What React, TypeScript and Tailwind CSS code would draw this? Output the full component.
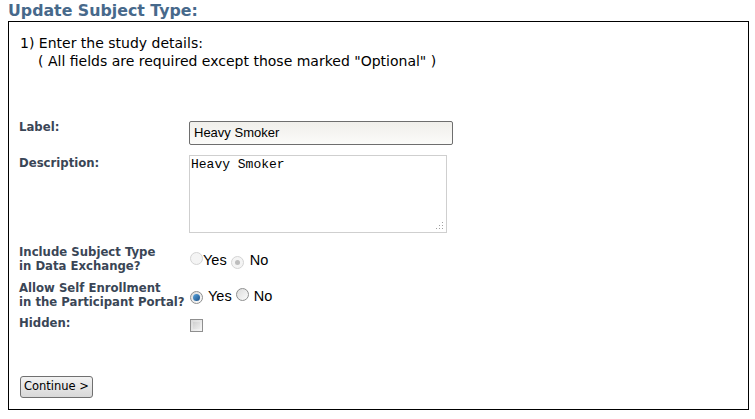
import React from "react";

const Radio = ({ checked, disabled }: { checked?: boolean; disabled?: boolean }) => {
  if (disabled) {
    return (
      <span className="inline-flex h-[13px] w-[13px] items-center justify-center rounded-full border border-[#d4d4d4] bg-[#f4f4f4]">
        {checked && <span className="h-[5px] w-[5px] rounded-full bg-[#bdbdbd]" />}
      </span>
    );
  }
  return (
    <span className="inline-flex h-[13px] w-[13px] items-center justify-center rounded-full border border-[#8e8f8f] bg-gradient-to-br from-[#dcdcdc] to-[#fbfbfb]">
      {checked && <span className="h-[7px] w-[7px] rounded-full bg-gradient-to-br from-[#5aa6e0] to-[#1a4f86]" />}
    </span>
  );
};

export default function App() {
  const label = "text-[11.7px] leading-[14px] font-bold text-[#3a4656] [font-family:'DejaVu_Sans',Verdana,sans-serif]";
  const opt = "text-[14.5px] leading-[16px] text-black [font-family:'Liberation_Sans',Arial,sans-serif]";
  return (
    <div className="w-[755px] h-[419px] bg-white">
      <div className="pl-[8px] pt-[2px] text-[15.8px] leading-[18px] font-bold text-[#47698b] [font-family:'DejaVu_Sans',Verdana,sans-serif]">
        Update Subject Type:
      </div>
      <div className="ml-[8px] mt-[1px] h-[389px] w-[741px] border border-black pl-[10px]">
        <div className="pt-[12px] pl-[1px] text-[14px] leading-[18px] text-black [font-family:'DejaVu_Sans',Tahoma,sans-serif]">
          <div>1) Enter the study details:</div>
          <div className="pl-[18px]">( All fields are required except those marked "Optional" )</div>
        </div>

        <div className="mt-[50px] flex">
          <div className={`w-[170px] ${label}`}>Label:</div>
          <div className="mt-[1px] flex h-[24px] w-[264px] items-center rounded-[2px] border border-[#6e6e6e] bg-gradient-to-b from-[#f0efeb] to-[#fbfbf9] pl-[4px] text-[13px] text-black [font-family:'Liberation_Sans',Arial,sans-serif]">
            Heavy Smoker
          </div>
        </div>

        <div className="mt-[10px] flex">
          <div className={`w-[170px] pt-px ${label}`}>Description:</div>
          <div className="relative h-[78px] w-[258px] border border-[#cfcfcf] bg-white pl-[1px] pt-[1px] text-[13px] leading-[15px] text-black [font-family:'Liberation_Mono','Courier_New',monospace]">
            Heavy Smoker
            <svg className="absolute bottom-[2px] right-[2px]" width="8" height="8" viewBox="0 0 8 8">
              <rect x="6" y="0" width="1" height="1" fill="#a0a0a0" />
              <rect x="3" y="3" width="1" height="1" fill="#a0a0a0" />
              <rect x="6" y="3" width="1" height="1" fill="#a0a0a0" />
              <rect x="0" y="6" width="1" height="1" fill="#a0a0a0" />
              <rect x="3" y="6" width="1" height="1" fill="#a0a0a0" />
              <rect x="6" y="6" width="1" height="1" fill="#a0a0a0" />
            </svg>
          </div>
        </div>

        <div className="mt-[11px] flex items-center">
          <div className={`w-[170px] pt-[1px] ${label}`}>
            Include Subject Type
            <br />
            in Data Exchange?
          </div>
          <div className={`mt-[3px] flex items-center ${opt}`}>
            <span className="ml-px"><Radio disabled /></span>
            <span className="ml-0">Yes</span>
            <span className="ml-[4px]"><Radio disabled checked /></span>
            <span className="ml-[6px]">No</span>
          </div>
        </div>

        <div className="mt-[8px] flex items-center">
          <div className={`w-[170px] ${label}`}>
            Allow Self Enrollment
            <br />
            in the Participant Portal?
          </div>
          <div className={`mt-[1px] flex items-center ${opt}`}>
            <span className="ml-px"><Radio checked /></span>
            <span className="ml-[5px]">Yes</span>
            <span className="ml-[4px]"><Radio /></span>
            <span className="ml-[5px]">No</span>
          </div>
        </div>

        <div className="mt-[6px] flex">
          <div className={`w-[170px] pt-px ${label}`}>Hidden:</div>
          <div className="mt-[4px] ml-[1px] h-[13px] w-[13px] border border-[#8f8f8f] bg-gradient-to-br from-[#d9d9d9] to-[#f7f7f7] p-[2px]">
            <div className="h-full w-full bg-gradient-to-br from-[#d0d0d0] to-[#ededed]" />
          </div>
        </div>

        <div className="mt-[44px] ml-[1px]">
          <button className="flex h-[22px] w-[73px] items-center justify-center rounded-[3px] border border-[#707070] bg-gradient-to-b from-[#f2f2f2] to-[#d8d8d8] text-[11.5px] text-black [font-family:'DejaVu_Sans',Tahoma,sans-serif]">
            Continue &gt;
          </button>
        </div>
      </div>
    </div>
  );
}
